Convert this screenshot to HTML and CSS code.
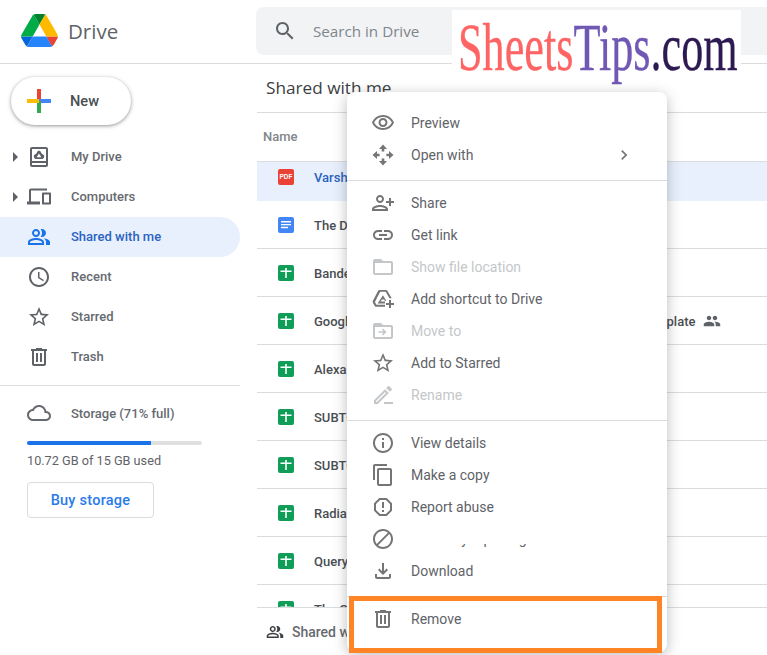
FILE: index.html
```html
<!DOCTYPE html>
<html lang="en">
<head>
<meta charset="utf-8">
<title>Drive</title>
<link rel="stylesheet" href="styles.css">
</head>
<body>
<svg class="sprite" aria-hidden="true">
  <symbol id="i-delete" viewBox="0 0 24 24"><path d="M15 4V3H9v1H4v2h1v13c0 1.1.9 2 2 2h10c1.1 0 2-.9 2-2V6h1V4h-5zm2 15H7V6h10v13zM9 8h2v9H9zm4 0h2v9h-2z"/></symbol>
  <symbol id="i-star" viewBox="0 0 24 24"><path d="M22 9.24l-7.19-.62L12 2 9.19 8.63 2 9.24l5.46 4.73L5.82 21 12 17.27 18.18 21l-1.63-7.03L22 9.24zM12 15.4l-3.76 2.27 1-4.28-3.32-2.88 4.38-.38L12 6.1l1.71 4.04 4.38.38-3.32 2.88 1 4.28L12 15.4z"/></symbol>
  <symbol id="i-sheet" viewBox="0 0 16 16"><rect width="16" height="16" rx="2" fill="#0f9d58"/><path fill="#fff" d="M7.2 3h1.6v2.6h4.7v1.5H8.8V13H7.2V7.1H2.500V5.600h4.700z"/></symbol>
  <symbol id="i-people" viewBox="0 0 24 24"><path d="M16 11c1.66 0 2.99-1.34 2.99-3S17.66 5 16 5c-1.66 0-3 1.34-3 3s1.34 3 3 3zm-8 0c1.66 0 2.99-1.34 2.99-3S9.66 5 8 5C6.34 5 5 6.34 5 8s1.34 3 3 3zm0 2c-2.33 0-7 1.17-7 3.5V19h14v-2.5c0-2.33-4.67-3.5-7-3.5zm8 0c-.29 0-.62.02-.97.05 1.16.84 1.97 1.97 1.97 3.45V19h6v-2.5c0-2.33-4.67-3.5-7-3.5z"/></symbol>
  <symbol id="i-people-alt" viewBox="0 0 24 24"><path d="M16.67 13.13C18.04 14.06 19 15.32 19 17v3h4v-3c0-2.18-3.57-3.47-6.33-3.87zM15 12c2.21 0 4-1.79 4-4s-1.79-4-4-4c-.47 0-.91.1-1.33.24C14.5 5.27 15 6.58 15 8s-.5 2.73-1.33 3.76c.42.14.86.24 1.33.24zM9 12c2.21 0 4-1.79 4-4s-1.79-4-4-4-4 1.79-4 4 1.79 4 4 4zm0-6c1.1 0 2 .9 2 2s-.9 2-2 2-2-.9-2-2 .9-2 2-2zm0 7c-2.67 0-8 1.34-8 4v3h16v-3c0-2.66-5.33-4-8-4zm6 5H3v-.99C3.2 16.29 6.3 15 9 15s5.8 1.29 6 2v1z"/></symbol>
  <symbol id="i-arrow" viewBox="0 0 6 10"><path d="M0 0l5 5-5 5z"/></symbol>
</svg>

<div class="app">
  <header class="topbar">
    <div class="brand">
      <svg class="drive-logo" viewBox="0 0 87.3 78">
        <path d="m6.6 66.85 3.85 6.65c.8 1.4 1.95 2.5 3.3 3.3l13.75-23.8h-27.5c0 1.55.4 3.1 1.2 4.5z" fill="#0066da"/>
        <path d="m43.65 25-13.75-23.8c-1.35.8-2.5 1.9-3.3 3.3l-25.4 44a9.06 9.06 0 0 0 -1.2 4.5h27.5z" fill="#00ac47"/>
        <path d="m73.55 76.8c1.35-.8 2.5-1.9 3.3-3.3l1.6-2.75 7.65-13.25c.8-1.4 1.2-2.95 1.2-4.5h-27.502l5.852 11.5z" fill="#ea4335"/>
        <path d="m43.65 25 13.75-23.8c-1.35-.8-2.9-1.2-4.5-1.2h-18.5c-1.6 0-3.15.45-4.5 1.2z" fill="#00832d"/>
        <path d="m59.8 53h-32.3l-13.75 23.8c1.35.8 2.9 1.2 4.5 1.2h50.8c1.6 0 3.15-.45 4.5-1.2z" fill="#2684fc"/>
        <path d="m73.4 26.5-12.7-22c-.8-1.4-1.95-2.5-3.3-3.3l-13.75 23.8 16.15 28h27.45c0-1.55-.4-3.1-1.2-4.5z" fill="#ffba00"/>
      </svg>
      <span class="brand-name">Drive</span>
    </div>
    <div class="search">
      <svg class="ic search-ic" viewBox="0 0 24 24"><path d="M15.5 14h-.79l-.28-.27C15.41 12.59 16 11.11 16 9.5 16 5.91 13.09 3 9.5 3S3 5.91 3 9.5 5.91 16 9.5 16c1.61 0 3.09-.59 4.23-1.57l.27.28v.79l5 4.99L20.49 19l-4.99-5zm-6 0C7.01 14 5 11.99 5 9.5S7.01 5 9.5 5 14 7.01 14 9.5 11.99 14 9.5 14z"/></svg>
      <span class="search-text">Search in Drive</span>
    </div>
  </header>

  <div class="body">
    <aside class="sidebar">
      <button class="new-btn">
        <svg class="plus" viewBox="0 0 24 24">
          <rect x="10" y="0" width="4" height="12" fill="#ea4335"/>
          <rect x="12" y="10" width="12" height="4" fill="#4285f4"/>
          <rect x="10" y="12" width="4" height="12" fill="#34a853"/>
          <rect x="0" y="10" width="12" height="4" fill="#fbbc04"/>
        </svg>
        <span>New</span>
      </button>
      <nav class="nav">
        <a class="nav-item">
          <svg class="nav-arrow"><use href="#i-arrow"/></svg>
          <svg class="ic nav-ic" viewBox="0 0 24 24"><path fill-rule="evenodd" d="M19 2H5c-1.1 0-2 .9-2 2v16c0 1.1.9 2 2 2h14c1.1 0 2-.9 2-2V4c0-1.1-.9-2-2-2zm0 2v12H5V4h14zM5 20v-2h14v2H5z"/><path fill-rule="evenodd" d="M12 5.8c.9 0 1.3.4 1.7 1l1.3 2.2c1.300.1 2.200 1.200 2.200 2.400 0 1.400-1.100 2.600-2.500 2.600H9.300c-1.400 0-2.500-1.200-2.500-2.600 0-1.200.9-2.300 2.200-2.400l1.300-2.200c.4-.6.8-1 1.700-1zM12 8.500l-2.300 3.700h4.600z"/></svg>
          <span>My Drive</span>
        </a>
        <a class="nav-item">
          <svg class="nav-arrow"><use href="#i-arrow"/></svg>
          <svg class="ic nav-ic" viewBox="0 0 24 24"><path d="M4 6h16V4H4c-1.1 0-2 .9-2 2v11H0v3h13v-3H4V6zm19 2h-7c-.55 0-1 .45-1 1v10c0 .55.45 1 1 1h7c.55 0 1-.45 1-1V9c0-.55-.45-1-1-1zm-1 10h-5v-8h5v8z" transform="translate(0 -.5)"/></svg>
          <span>Computers</span>
        </a>
        <a class="nav-item active">
          <svg class="ic nav-ic"><use href="#i-people-alt"/></svg>
          <span>Shared with me</span>
        </a>
        <a class="nav-item">
          <svg class="ic nav-ic" viewBox="0 0 24 24"><path d="M11.99 2C6.47 2 2 6.48 2 12s4.47 10 9.99 10C17.52 22 22 17.52 22 12S17.52 2 11.99 2zM12 20c-4.42 0-8-3.58-8-8s3.58-8 8-8 8 3.58 8 8-3.58 8-8 8zm.5-13H11v6l5.25 3.15.75-1.23-4.5-2.67z"/></svg>
          <span>Recent</span>
        </a>
        <a class="nav-item">
          <svg class="ic nav-ic"><use href="#i-star"/></svg>
          <span>Starred</span>
        </a>
        <a class="nav-item">
          <svg class="ic nav-ic"><use href="#i-delete"/></svg>
          <span>Trash</span>
        </a>
      </nav>
      <div class="side-divider"></div>
      <div class="storage">
        <div class="storage-head">
          <svg class="ic" viewBox="0 0 24 24"><path d="M19.35 10.04C18.67 6.59 15.64 4 12 4 9.11 4 6.6 5.64 5.35 8.04 2.34 8.36 0 10.91 0 14c0 3.31 2.69 6 6 6h13c2.76 0 5-2.24 5-5 0-2.64-2.05-4.78-4.65-4.96zM19 18H6c-2.21 0-4-1.79-4-4s1.79-4 4-4h.71C7.37 7.69 9.48 6 12 6c3.04 0 5.5 2.46 5.5 5.5v.5H19c1.66 0 3 1.34 3 3s-1.34 3-3 3z"/></svg>
          <span>Storage (71% full)</span>
        </div>
        <div class="bar"><div class="bar-fill"></div></div>
        <div class="used">10.72 GB of 15 GB used</div>
        <button class="buy">Buy storage</button>
      </div>
    </aside>

    <main class="main">
      <div class="title">Shared with me</div>
      <div class="col-head">Name</div>
      <div class="list">
        <div class="rows">
          <div class="row selected">
            <svg class="file" viewBox="0 0 16 16"><rect width="16" height="16" rx="2" fill="#ea4335"/><text x="8" y="10.3" class="pdf">PDF</text></svg>
            <span class="name">Varshini Resume Final Version</span>
          </div>
          <div class="row">
            <svg class="file" viewBox="0 0 16 16"><rect width="16" height="16" rx="2" fill="#4285f4"/><path fill="#fff" d="M3 4h10v1.4H3zM3 6.9h10v1.4H3zM3 9.8h7v1.4H3z"/></svg>
            <span class="name">The Daily Report</span>
          </div>
          <div class="row"><svg class="file"><use href="#i-sheet"/></svg><span class="name">Bandey Sheet</span></div>
          <div class="row">
            <svg class="file"><use href="#i-sheet"/></svg>
            <span class="name">Google Sheets Free Month Attendance Register Student Template</span>
            <svg class="shared-ic"><use href="#i-people"/></svg>
          </div>
          <div class="row"><svg class="file"><use href="#i-sheet"/></svg><span class="name">Alexa Sheet</span></div>
          <div class="row"><svg class="file"><use href="#i-sheet"/></svg><span class="name">SUBTOTAL Sheet</span></div>
          <div class="row"><svg class="file"><use href="#i-sheet"/></svg><span class="name">SUBTOTAL Copy</span></div>
          <div class="row"><svg class="file"><use href="#i-sheet"/></svg><span class="name">Radial Chart</span></div>
          <div class="row"><svg class="file"><use href="#i-sheet"/></svg><span class="name">Query Sheet</span></div>
          <div class="row"><svg class="file"><use href="#i-sheet"/></svg><span class="name">The Gantt Chart</span></div>
        </div>
      </div>
      <div class="footer">
        <svg class="footer-ic"><use href="#i-people-alt"/></svg>
        <span>Shared with me</span>
      </div>
    </main>
  </div>

  <div class="watermark"><span class="wm-text"><span class="wm-a">Sheets</span><span class="wm-b">Tips</span><span class="wm-c">.com</span></span></div>

  <div class="menu">
    <div class="mi"><svg class="ic" viewBox="0 0 24 24"><path d="M12 6c3.79 0 7.17 2.13 8.82 5.5C19.17 14.87 15.79 17 12 17s-7.17-2.13-8.82-5.5C4.83 8.13 8.21 6 12 6m0-2C7 4 2.73 7.11 1 11.5 2.73 15.89 7 19 12 19s9.27-3.11 11-7.5C21.27 7.11 17 4 12 4zm0 5c1.38 0 2.5 1.12 2.5 2.5S13.38 14 12 14s-2.5-1.12-2.5-2.5S10.62 9 12 9m0-2c-2.48 0-4.5 2.02-4.5 4.5S9.52 16 12 16s4.5-2.02 4.5-4.5S14.48 7 12 7z"/></svg><span>Preview</span></div>
    <div class="mi"><svg class="ic" viewBox="0 0 24 24"><path d="M12 1.5l4 4.5h-2.7v2.6h-2.6V6H8zM1.5 12L6 8v2.7h2.6v2.6H6V16zM22.5 12L18 16v-2.7h-2.6v-2.6H18V8zM12 22.5L8 18h2.7v-2.6h2.6V18H16z"/></svg><span>Open with</span><svg class="chev" viewBox="0 0 24 24"><path d="M10 6L8.59 7.41 13.17 12l-4.58 4.59L10 18l6-6z"/></svg></div>
    <div class="md"></div>
    <div class="mi"><svg class="ic" viewBox="0 0 24 24"><path transform="matrix(-1 0 0 1 24 0)" d="M15 12c2.21 0 4-1.79 4-4s-1.79-4-4-4-4 1.79-4 4 1.79 4 4 4zm0-6c1.1 0 2 .9 2 2s-.9 2-2 2-2-.9-2-2 .9-2 2-2zm0 8c-2.67 0-8 1.34-8 4v2h16v-2c0-2.66-5.33-4-8-4zm-6 4c.22-.72 3.31-2 6-2 2.7 0 5.8 1.29 6 2H9zm-3-3v-3h3v-2H6V7H4v3H1v2h3v3h2z"/></svg><span>Share</span></div>
    <div class="mi"><svg class="ic" viewBox="0 0 24 24"><path d="M3.9 12c0-1.71 1.39-3.1 3.1-3.1h4V7H7c-2.76 0-5 2.24-5 5s2.24 5 5 5h4v-1.9H7c-1.71 0-3.1-1.39-3.1-3.1zM8 13h8v-2H8v2zm9-6h-4v1.9h4c1.71 0 3.1 1.39 3.1 3.1s-1.39 3.1-3.1 3.1h-4V17h4c2.76 0 5-2.24 5-5s-2.24-5-5-5z"/></svg><span>Get link</span></div>
    <div class="mi off"><svg class="ic" viewBox="0 0 24 24"><path d="M20 6h-8l-2-2H4c-1.1 0-1.99.9-1.99 2L2 18c0 1.1.9 2 2 2h16c1.1 0 2-.9 2-2V8c0-1.1-.9-2-2-2zm0 12H4V8h16v10z"/></svg><span>Show file location</span></div>
    <div class="mi"><svg class="ic" viewBox="0 0 24 24"><path d="M8.6 3h6.2c.7 0 1.3.4 1.7 1l4.2 7.2h-2.3l-3.7-6.4H9.2L3.9 15l1.6 2.8H14v1.9H5.3c-.7 0-1.4-.4-1.7-1l-1.7-3c-.3-.6-.3-1.3 0-1.9L7 4c.3-.6.9-1 1.6-1zM12 8.2l3.3 5.8H14l-.9-1.6h-2.2L9.6 14.6h4.4v1.8H6.6z"/><path d="M18 13h2v3h3v2h-3v3h-2v-3h-3v-2h3z"/></svg><span>Add shortcut to Drive</span></div>
    <div class="mi off"><svg class="ic" viewBox="0 0 24 24"><path d="M20 6h-8l-2-2H4c-1.1 0-2 .9-2 2v12c0 1.1.9 2 2 2h16c1.1 0 2-.9 2-2V8c0-1.1-.9-2-2-2zm0 12H4V8h16v10zM12 9.5l-1.1 1.1 1.6 1.6H7.5v1.6h5l-1.6 1.6 1.1 1.1 3.5-3.5z"/></svg><span>Move to</span></div>
    <div class="mi"><svg class="ic"><use href="#i-star"/></svg><span>Add to Starred</span></div>
    <div class="mi off"><svg class="ic" viewBox="0 0 24 24"><path d="M14.06 9.02l.92.92L5.92 19H5v-.92l9.06-9.06M17.66 3c-.25 0-.51.1-.7.29l-1.83 1.83 3.75 3.75 1.83-1.83c.39-.39.39-1.02 0-1.41l-2.34-2.34c-.2-.2-.45-.29-.71-.29zm-3.6 3.19L3 17.25V21h3.75L17.81 9.94l-3.75-3.75z"/><path d="M13 19h9v2h-9z"/></svg><span>Rename</span></div>
    <div class="md"></div>
    <div class="mi"><svg class="ic" viewBox="0 0 24 24"><path d="M11 7h2v2h-2zm0 4h2v6h-2zm1-9C6.48 2 2 6.48 2 12s4.48 10 10 10 10-4.48 10-10S17.52 2 12 2zm0 18c-4.41 0-8-3.59-8-8s3.59-8 8-8 8 3.59 8 8-3.59 8-8 8z"/></svg><span>View details</span></div>
    <div class="mi"><svg class="ic" viewBox="0 0 24 24"><path d="M16 1H4c-1.1 0-2 .9-2 2v14h2V3h12V1zm3 4H8c-1.1 0-2 .9-2 2v14c0 1.1.9 2 2 2h11c1.1 0 2-.9 2-2V7c0-1.1-.9-2-2-2zm0 16H8V7h11v14z"/></svg><span>Make a copy</span></div>
    <div class="mi"><svg class="ic" viewBox="0 0 24 24"><path d="M15.73 3H8.27L3 8.27v7.46L8.27 21h7.46L21 15.73V8.27L15.73 3zM19 14.9L14.9 19H9.1L5 14.9V9.1L9.1 5h5.8L19 9.1v5.8z"/><path d="M11 7h2v6h-2zM11 15h2v2h-2z"/></svg><span>Report abuse</span></div>
    <div class="mi redacted"><svg class="ic" viewBox="0 0 24 24"><path d="M12 2C6.48 2 2 6.48 2 12s4.48 10 10 10 10-4.48 10-10S17.52 2 12 2zM4 12c0-4.42 3.58-8 8-8 1.85 0 3.55.63 4.9 1.69L5.69 16.9C4.63 15.55 4 13.85 4 12zm8 8c-1.85 0-3.55-.63-4.9-1.69L18.31 7.1C19.37 8.45 20 10.15 20 12c0 4.42-3.58 8-8 8z"/></svg><span class="redact-text">Block thynnpnmeg</span></div>
    <div class="mi"><svg class="ic" viewBox="0 0 24 24"><path d="M18 15v3H6v-3H4v3c0 1.1.9 2 2 2h12c1.1 0 2-.9 2-2v-3h-2zm-1-4l-1.41-1.41L13 12.17V4h-2v8.17L8.41 9.59 7 11l5 5 5-5z"/></svg><span>Download</span></div>
    <div class="md"></div>
    <div class="mi"><svg class="ic"><use href="#i-delete"/></svg><span>Remove</span></div>
    <div class="highlight"></div>
  </div>
</div>
</body>
</html>
```
FILE: styles.css
```css
* { box-sizing: border-box; }
html, body { margin: 0; height: 100%; }
body { overflow: hidden; background: #fff; font-family: Roboto, "Liberation Sans", sans-serif; color: #5f6368; }
.sprite { position: absolute; width: 0; height: 0; }
.app { position: relative; width: 767px; height: 655px; overflow: hidden; display: flex; flex-direction: column; }
.ic { width: 24px; height: 24px; flex: none; fill: currentColor; }

.topbar { height: 64px; flex: none; display: flex; border-bottom: 1px solid #dadce0; }
.brand { width: 256px; flex: none; display: flex; align-items: center; padding: 0 0 2px 21px; }
.drive-logo { width: 37px; height: 33px; flex: none; }
.brand-name { margin-left: 10px; font: 400 20.5px "Open Sans", Roboto, sans-serif; color: #5f6368; }
.search { flex: 1; height: 48px; margin-top: 7px; background: #f1f3f4; border-radius: 8px 0 0 8px; display: flex; align-items: center; padding-left: 17px; }
.search-ic { color: #5f6368; }
.search-text { margin-left: 16px; font: 400 15.2px "Open Sans", Roboto, sans-serif; color: #80868b; }

.body { flex: 1; display: flex; min-height: 0; }
.sidebar { width: 256px; flex: none; padding-top: 13px; }
.new-btn { width: 120px; height: 48px; margin-left: 11px; display: flex; align-items: center; gap: 19px; padding: 0 0 0 16px; background: #fff; border: 0; border-radius: 24px; box-shadow: 0 1px 3px rgba(60,64,67,.4), 0 1px 4px 1px rgba(60,64,67,.15); font: 500 14.6px/20px Roboto, sans-serif; color: #4a4e52; }
.plus { width: 24px; height: 24px; flex: none; }

.nav { margin-top: 12px; }
.nav-item { position: relative; width: 240px; height: 40px; display: flex; align-items: center; padding-left: 27px; font: 500 13px/18px Roboto, sans-serif; color: #666a6f; border-radius: 0 20px 20px 0; }
.nav-item > span { margin-left: 20px; padding-bottom: 1px; }
.nav-ic { color: #5f6368; }
.nav-item.active { background: #e8f0fe; color: #2a63c0; }
.nav-item.active .nav-ic { color: #1a73e8; }
.nav-arrow { position: absolute; left: 13px; top: 15px; width: 6px; height: 10px; fill: #5f6368; }
.side-divider { width: 240px; height: 1px; margin-top: 8px; background: #dadce0; }

.storage { padding: 15px 0 0 27px; }
.storage-head { display: flex; align-items: center; font: 500 13px Roboto, sans-serif; color: #666a6f; }
.storage-head span { margin-left: 20px; }
.bar { width: 175px; height: 4px; margin-top: 16px; background: #e0e0e0; border-radius: 2px; overflow: hidden; }
.bar-fill { width: 71%; height: 100%; background: #1a73e8; }
.used { margin-top: 8px; font: 400 12.7px/16px Roboto, sans-serif; color: #5f6368; }
.buy { width: 127px; height: 36px; margin-top: 13px; background: #fff; border: 1px solid #dadce0; border-radius: 4px; font: 500 14.5px Roboto, sans-serif; letter-spacing: .25px; color: #2a7bea; }

.main { flex: 1; min-width: 0; display: flex; flex-direction: column; padding-left: 1px; }
.title { height: 49px; flex: none; border-bottom: 1px solid #dadce0; display: flex; align-items: center; padding: 0 0 1px 9px; font: 400 17.2px "Open Sans", Roboto, sans-serif; color: #3c4043; }
.col-head { height: 49px; flex: none; border-bottom: 1px solid #dadce0; display: flex; align-items: center; padding: 0 0 1px 6px; font: 500 13px Roboto, sans-serif; color: #80868b; }
.list { flex: 1; min-height: 0; overflow: hidden; }
.rows { margin-top: -9px; }
.row { height: 48px; display: flex; align-items: center; padding: 1px 0 0 21px; border-bottom: 1px solid #dadce0; white-space: nowrap; }
.row.selected { background: #e8f0fe; border-bottom-color: transparent; }
.row.selected .name { color: #2a63c0; }
.file { width: 16px; height: 16px; flex: none; }
.pdf { font: 700 6.4px "Liberation Sans", sans-serif; fill: #fff; text-anchor: middle; }
.name { margin-left: 20px; font: 500 13px Roboto, sans-serif; color: #4a4e52; }
.shared-ic { width: 18px; height: 18px; margin-left: 8px; fill: #5f6368; flex: none; }
.footer { height: 48px; flex: none; border-top: 1px solid #dadce0; background: #fff; display: flex; align-items: center; padding-left: 9px; font: 500 14px Roboto, sans-serif; color: #666a6f; white-space: nowrap; }
.footer-ic { width: 18px; height: 18px; margin-right: 8px; fill: #3c4043; flex: none; }

.watermark { position: absolute; left: 452px; top: 10px; width: 289px; height: 78px; background: #fff; overflow: hidden; }
.wm-text { position: absolute; left: 6px; top: -2px; font: 400 67px/78px "Liberation Serif", serif; white-space: nowrap; -webkit-text-stroke: .3px currentColor; transform: scaleX(.66); transform-origin: left center; }
.wm-a { color: #ff6464; }
.wm-b { color: #7058b4; }
.wm-c { color: #2e1a52; }

.menu { position: absolute; left: 347px; top: 92px; width: 320px; height: 560px; padding-top: 15px; background: #fff; border-radius: 8px; box-shadow: 0 3px 14px rgba(60,64,67,.35); }
.mi { position: relative; height: 32px; display: flex; align-items: center; padding-left: 24px; font: 400 14px Roboto, sans-serif; color: #5f6368; }
.mi .ic { color: #757575; }
.mi > span { margin-left: 16px; }
.mi.off, .mi.off .ic { color: #c4c7c9; }
.chev { width: 20px; height: 20px; fill: #757575; margin-left: auto; margin-right: 33px; }
.md { height: 1px; margin: 9px 0 6px; background: #dadce0; }
.redacted::after { content: ""; position: absolute; left: 62px; top: 0; width: 150px; height: 21px; background: #fff; }
.highlight { position: absolute; left: 2px; top: 504px; width: 313px; height: 57px; border: 5px solid #ff8426; }
```
